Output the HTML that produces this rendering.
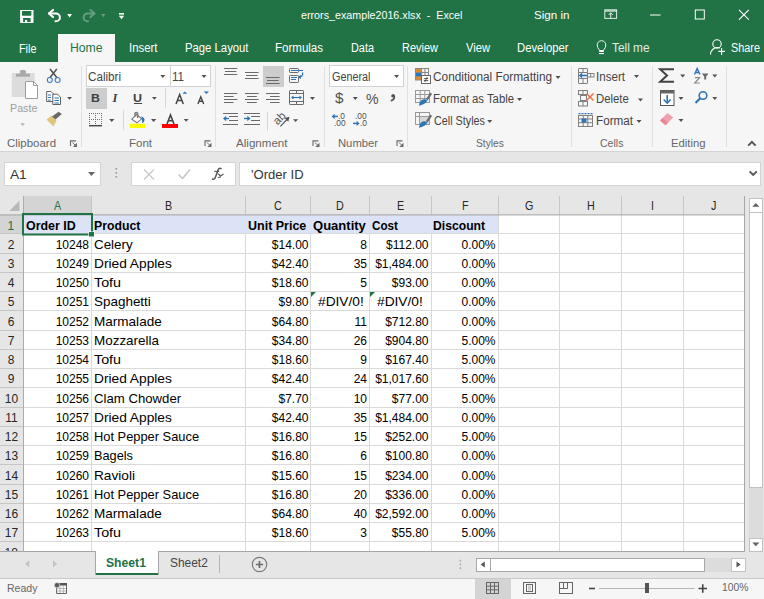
<!DOCTYPE html><html><head><meta charset="utf-8"><style>
html,body{margin:0;padding:0;width:764px;height:599px;overflow:hidden;background:#fff}
body{position:relative;font-family:"Liberation Sans",sans-serif}
.t{position:absolute;white-space:pre;line-height:1;transform-origin:0 0}
.r{position:absolute}
.s{position:absolute;left:0;top:0;overflow:visible}
</style></head><body>
<div class="r" style="left:0px;top:0px;width:764px;height:62px;background:#217346;"></div>
<div class="r" style="left:58px;top:34px;width:57px;height:28px;background:#f6f6f6;"></div>
<svg class="s" width="764" height="599" viewBox="0 0 764 599" style=""><rect x="20.1" y="10" width="13.4" height="12.9" fill="#fff"/><rect x="22" y="11" width="9.4" height="4.7" rx="0.6" fill="#217346"/><path d="M23.1 18 H30.6 V21.9 H27.1 V19.9 H25 V21.9 H23.1 Z" fill="#217346"/></svg>
<svg class="s" width="764" height="599" viewBox="0 0 764 599" style=""><path d="M49 13.5 H56 A3.9 3.9 0 0 1 56 21.3 H55.5" fill="none" stroke="#fff" stroke-width="2" stroke-linecap="round"/><path d="M53 10 L49 13.5 L53 17" fill="none" stroke="#fff" stroke-width="2.2" stroke-linecap="round" stroke-linejoin="round"/><path d="M67.2 14 H72 L69.6 17.4 Z" fill="#fff"/></svg>
<svg class="s" width="764" height="599" viewBox="0 0 764 599" style=""><g opacity="0.3"><path d="M94 13.5 H87.5 A3.9 3.9 0 0 0 87.5 21.3 H88" fill="none" stroke="#fff" stroke-width="2" stroke-linecap="round"/><path d="M90.5 10 L94.5 13.5 L90.5 17" fill="none" stroke="#fff" stroke-width="2.2" stroke-linecap="round" stroke-linejoin="round"/><path d="M101 14 H105.5 L103.25 17.2 Z" fill="#fff"/></g></svg>
<svg class="s" width="764" height="599" viewBox="0 0 764 599" style=""><rect x="119" y="13" width="5" height="1.6" fill="#fff"/><path d="M118.8 15.8 H124.2 L121.5 19.3 Z" fill="#fff"/></svg>
<div class="t" style="left:300.52px;top:10.25px;font-size:11.5px;color:#ffffff;font-weight:400;transform:scaleX(0.9322);">errors_example2016.xlsx  -  Excel</div>
<div class="t" style="left:534.48px;top:10.25px;font-size:11.5px;color:#ffffff;font-weight:400;transform:scaleX(1.0109);">Sign in</div>
<svg class="s" width="764" height="599" viewBox="0 0 764 599" style=""><rect x="604.8" y="9.8" width="11.8" height="8.6" fill="none" stroke="#fff" stroke-width="1" opacity="0.85"/><rect x="605" y="10" width="11.5" height="2" fill="#fff" opacity="0.55"/><path d="M610.7 18 V12.8 M608.6 15 L610.7 12.8 L612.8 15" fill="none" stroke="#fff" stroke-width="1" opacity="0.85"/></svg>
<svg class="s" width="764" height="599" viewBox="0 0 764 599" style=""><rect x="650" y="14.5" width="10.5" height="1" fill="#fff"/></svg>
<svg class="s" width="764" height="599" viewBox="0 0 764 599" style=""><rect x="695.3" y="10" width="9" height="9" fill="none" stroke="#fff" stroke-width="1"/></svg>
<svg class="s" width="764" height="599" viewBox="0 0 764 599" style=""><path d="M739 9.8 L748.8 19.6 M748.8 9.8 L739 19.6" stroke="#fff" stroke-width="1.1"/></svg>
<div class="t" style="left:18.51px;top:43.00px;font-size:12px;color:#ffffff;font-weight:400;transform:scaleX(0.9037);">File</div>
<div class="t" style="left:69.95px;top:42.00px;font-size:12px;color:#217346;font-weight:400;transform:scaleX(1.0184);">Home</div>
<div class="t" style="left:128.99px;top:42.00px;font-size:12px;color:#ffffff;font-weight:400;transform:scaleX(0.9505);">Insert</div>
<div class="t" style="left:184.99px;top:42.00px;font-size:12px;color:#ffffff;font-weight:400;transform:scaleX(0.9425);">Page Layout</div>
<div class="t" style="left:275.48px;top:42.00px;font-size:12px;color:#ffffff;font-weight:400;transform:scaleX(0.9605);">Formulas</div>
<div class="t" style="left:350.51px;top:42.00px;font-size:12px;color:#ffffff;font-weight:400;transform:scaleX(0.9065);">Data</div>
<div class="t" style="left:401.51px;top:42.00px;font-size:12px;color:#ffffff;font-weight:400;transform:scaleX(0.9146);">Review</div>
<div class="t" style="left:465.50px;top:42.00px;font-size:12px;color:#ffffff;font-weight:400;transform:scaleX(0.9306);">View</div>
<div class="t" style="left:516.99px;top:42.00px;font-size:12px;color:#ffffff;font-weight:400;transform:scaleX(0.9418);">Developer</div>
<svg class="s" width="764" height="599" viewBox="0 0 764 599" style=""><path d="M599.3 50 Q597.2 47.6 597.2 45 A4.3 4.3 0 0 1 605.8 45 Q605.8 47.6 603.7 50" fill="none" stroke="#fff" stroke-width="1" opacity="0.9"/><rect x="599.2" y="50" width="4.6" height="2" fill="#fff"/><rect x="599" y="53" width="5" height="1.1" fill="#fff"/></svg>
<div class="t" style="left:612.47px;top:42.00px;font-size:12px;color:#e0ece4;font-weight:400;transform:scaleX(0.9883);">Tell me</div>
<svg class="s" width="764" height="599" viewBox="0 0 764 599" style=""><g fill="none" stroke="#fff" stroke-width="1.1"><circle cx="717" cy="44" r="4.2"/><path d="M710.5 54.5 A7 7 0 0 1 720 48"/><path d="M718.3 51.4 H725 M721.6 48 V55"/></g></svg>
<div class="t" style="left:731.01px;top:42.00px;font-size:12px;color:#ffffff;font-weight:400;transform:scaleX(0.9049);">Share</div>
<div class="r" style="left:0px;top:62px;width:764px;height:89px;background:#f6f6f6;"></div>
<div class="r" style="left:0px;top:151px;width:764px;height:1px;background:#d4d4d4;"></div>
<div class="r" style="left:0px;top:152px;width:764px;height:44px;background:#e6e6e6;"></div>
<div class="r" style="left:81px;top:66px;width:1px;height:81px;background:#e0e0e0;"></div>
<div class="r" style="left:215px;top:66px;width:1px;height:81px;background:#e0e0e0;"></div>
<div class="r" style="left:324px;top:66px;width:1px;height:81px;background:#e0e0e0;"></div>
<div class="r" style="left:407px;top:66px;width:1px;height:81px;background:#e0e0e0;"></div>
<div class="r" style="left:571px;top:66px;width:1px;height:81px;background:#e0e0e0;"></div>
<div class="r" style="left:652px;top:66px;width:1px;height:81px;background:#e0e0e0;"></div>
<div class="r" style="left:726px;top:66px;width:1px;height:81px;background:#e0e0e0;"></div>
<div class="t" style="left:7.48px;top:137.50px;font-size:11px;color:#666666;font-weight:400;transform:scaleX(1.0413);">Clipboard</div>
<div class="t" style="left:128.98px;top:137.50px;font-size:11px;color:#666666;font-weight:400;transform:scaleX(1.0465);">Font</div>
<div class="t" style="left:235.98px;top:137.50px;font-size:11px;color:#666666;font-weight:400;transform:scaleX(1.0537);">Alignment</div>
<div class="t" style="left:338.49px;top:137.50px;font-size:11px;color:#666666;font-weight:400;transform:scaleX(1.0227);">Number</div>
<div class="t" style="left:476.04px;top:137.50px;font-size:11px;color:#666666;font-weight:400;transform:scaleX(0.9322);">Styles</div>
<div class="t" style="left:599.53px;top:137.50px;font-size:11px;color:#666666;font-weight:400;transform:scaleX(0.9591);">Cells</div>
<div class="t" style="left:671.49px;top:137.50px;font-size:11px;color:#666666;font-weight:400;transform:scaleX(1.0262);">Editing</div>
<svg class="s" width="764" height="599" viewBox="0 0 764 599" style=""><path d="M70.5 146 V140.9 H76" fill="none" stroke="#6a6a6a" stroke-width="1.1"/><path d="M77 142.8 V147 H72.8 Z" fill="#6a6a6a"/><path d="M72.5 142.5 L75 145" stroke="#6a6a6a" stroke-width="1"/></svg>
<svg class="s" width="764" height="599" viewBox="0 0 764 599" style=""><path d="M205.0 146 V140.9 H210.5" fill="none" stroke="#6a6a6a" stroke-width="1.1"/><path d="M211.5 142.8 V147 H207.3 Z" fill="#6a6a6a"/><path d="M207.0 142.5 L209.5 145" stroke="#6a6a6a" stroke-width="1"/></svg>
<svg class="s" width="764" height="599" viewBox="0 0 764 599" style=""><path d="M313.0 146 V140.9 H318.5" fill="none" stroke="#6a6a6a" stroke-width="1.1"/><path d="M319.5 142.8 V147 H315.3 Z" fill="#6a6a6a"/><path d="M315.0 142.5 L317.5 145" stroke="#6a6a6a" stroke-width="1"/></svg>
<svg class="s" width="764" height="599" viewBox="0 0 764 599" style=""><path d="M397.0 146 V140.9 H402.5" fill="none" stroke="#6a6a6a" stroke-width="1.1"/><path d="M403.5 142.8 V147 H399.3 Z" fill="#6a6a6a"/><path d="M399.0 142.5 L401.5 145" stroke="#6a6a6a" stroke-width="1"/></svg>
<svg class="s" width="764" height="599" viewBox="0 0 764 599" style=""><path d="M748.2 145.6 L751.9 141.9 L755.6 145.6" fill="none" stroke="#555" stroke-width="1.9"/></svg>
<div class="r" style="left:4px;top:162px;width:97px;height:24px;background:#fff;box-sizing:border-box;border:1px solid #d4d4d4"></div>
<div class="t" style="left:9.68px;top:168.50px;font-size:12px;color:#333;font-weight:400;transform:scaleX(1.1399);">A1</div>
<svg class="s" width="764" height="599" viewBox="0 0 764 599" style=""><path d="M88 172 H95 L91.5 176 Z" fill="#666"/></svg>
<svg class="s" width="764" height="599" viewBox="0 0 764 599" style=""><g fill="#999"><rect x="115.5" y="168" width="1.6" height="1.6"/><rect x="115.5" y="172" width="1.6" height="1.6"/><rect x="115.5" y="176" width="1.6" height="1.6"/></g></svg>
<div class="r" style="left:131px;top:162px;width:105px;height:24px;background:#fff;box-sizing:border-box;border:1px solid #d4d4d4"></div>
<svg class="s" width="764" height="599" viewBox="0 0 764 599" style=""><path d="M144 169.5 L154 179.5 M154 169.5 L144 179.5" stroke="#c6c6c6" stroke-width="1.1"/><path d="M178.5 174.5 L182.5 178.5 L190 169.5" fill="none" stroke="#c6c6c6" stroke-width="1.6"/></svg>
<svg class="s" width="764" height="599" viewBox="0 0 764 599" style=""><path d="M212.5 179 Q214.5 180 215.5 177 L218 170 Q219 167.6 221 168.6" fill="none" stroke="#555" stroke-width="1.5" stroke-linecap="round"/><path d="M214.3 171.4 H219.3" stroke="#555" stroke-width="1.1"/><path d="M217.8 174.2 Q219.5 173.6 220.5 177.5 M223.5 174 L218 177.8" fill="none" stroke="#555" stroke-width="1.2"/></svg>
<div class="r" style="left:239px;top:162px;width:522px;height:24px;background:#fff;box-sizing:border-box;border:1px solid #d4d4d4"></div>
<div class="t" style="left:250.71px;top:168.50px;font-size:12px;color:#333;font-weight:400;transform:scaleX(1.0885);">'Order ID</div>
<svg class="s" width="764" height="599" viewBox="0 0 764 599" style=""><path d="M749.6 171.4 L753.2 175 L756.8 171.4" fill="none" stroke="#555" stroke-width="1.9"/></svg>
<div class="r" style="left:0px;top:196px;width:745px;height:19px;background:#e6e6e6;"></div>
<div class="r" style="left:24px;top:196px;width:67px;height:18px;background:#d4d4d4;"></div>
<svg class="s" width="764" height="599" viewBox="0 0 764 599" style=""><path d="M9.5 211 L19.5 211 L19.5 200.5 Z" fill="#b9b9b9"/></svg>
<div class="r" style="left:91px;top:196px;width:1px;height:18px;background:#c6c6c6;"></div>
<div class="r" style="left:245px;top:196px;width:1px;height:18px;background:#c6c6c6;"></div>
<div class="r" style="left:310px;top:196px;width:1px;height:18px;background:#c6c6c6;"></div>
<div class="r" style="left:369px;top:196px;width:1px;height:18px;background:#c6c6c6;"></div>
<div class="r" style="left:431px;top:196px;width:1px;height:18px;background:#c6c6c6;"></div>
<div class="r" style="left:498px;top:196px;width:1px;height:18px;background:#c6c6c6;"></div>
<div class="r" style="left:559px;top:196px;width:1px;height:18px;background:#c6c6c6;"></div>
<div class="r" style="left:621px;top:196px;width:1px;height:18px;background:#c6c6c6;"></div>
<div class="r" style="left:683px;top:196px;width:1px;height:18px;background:#c6c6c6;"></div>
<div class="r" style="left:23px;top:196px;width:1px;height:355px;background:#ababab;"></div>
<div class="r" style="left:0px;top:214px;width:744px;height:1px;background:#bdbdbd;"></div>
<div class="r" style="left:0px;top:215px;width:23px;height:336px;background:#e6e6e6;"></div>
<div class="r" style="left:0px;top:215px;width:22px;height:19px;background:#d4d4d4;"></div>
<div class="t" style="left:53.91px;top:199.75px;font-size:12.5px;color:#217346;font-weight:400;transform:scaleX(0.8600);">A</div>
<div class="t" style="left:164.91px;top:199.75px;font-size:12.5px;color:#262626;font-weight:400;transform:scaleX(0.8600);">B</div>
<div class="t" style="left:274.12px;top:199.75px;font-size:12.5px;color:#262626;font-weight:400;transform:scaleX(0.8600);">C</div>
<div class="t" style="left:336.12px;top:199.75px;font-size:12.5px;color:#262626;font-weight:400;transform:scaleX(0.8600);">D</div>
<div class="t" style="left:396.91px;top:199.75px;font-size:12.5px;color:#262626;font-weight:400;transform:scaleX(0.8600);">E</div>
<div class="t" style="left:461.72px;top:199.75px;font-size:12.5px;color:#262626;font-weight:400;transform:scaleX(0.8600);">F</div>
<div class="t" style="left:524.82px;top:199.75px;font-size:12.5px;color:#262626;font-weight:400;transform:scaleX(0.8600);">G</div>
<div class="t" style="left:586.62px;top:199.75px;font-size:12.5px;color:#262626;font-weight:400;transform:scaleX(0.8600);">H</div>
<div class="t" style="left:651.01px;top:199.75px;font-size:12.5px;color:#262626;font-weight:400;transform:scaleX(0.8600);">I</div>
<div class="t" style="left:711.31px;top:199.75px;font-size:12.5px;color:#262626;font-weight:400;transform:scaleX(0.8600);">J</div>
<div class="r" style="left:24px;top:215px;width:720px;height:336px;background:#fff;"></div>
<div class="r" style="left:24px;top:215px;width:474px;height:19px;background:#dde3f6;"></div>
<div class="r" style="left:0px;top:233px;width:23px;height:1px;background:#c6c6c6;"></div>
<div class="r" style="left:24px;top:233px;width:720px;height:1px;background:#dadada;"></div>
<div class="r" style="left:0px;top:253px;width:23px;height:1px;background:#c6c6c6;"></div>
<div class="r" style="left:24px;top:253px;width:720px;height:1px;background:#dadada;"></div>
<div class="r" style="left:0px;top:272px;width:23px;height:1px;background:#c6c6c6;"></div>
<div class="r" style="left:24px;top:272px;width:720px;height:1px;background:#dadada;"></div>
<div class="r" style="left:0px;top:291px;width:23px;height:1px;background:#c6c6c6;"></div>
<div class="r" style="left:24px;top:291px;width:720px;height:1px;background:#dadada;"></div>
<div class="r" style="left:0px;top:310px;width:23px;height:1px;background:#c6c6c6;"></div>
<div class="r" style="left:24px;top:310px;width:720px;height:1px;background:#dadada;"></div>
<div class="r" style="left:0px;top:330px;width:23px;height:1px;background:#c6c6c6;"></div>
<div class="r" style="left:24px;top:330px;width:720px;height:1px;background:#dadada;"></div>
<div class="r" style="left:0px;top:349px;width:23px;height:1px;background:#c6c6c6;"></div>
<div class="r" style="left:24px;top:349px;width:720px;height:1px;background:#dadada;"></div>
<div class="r" style="left:0px;top:368px;width:23px;height:1px;background:#c6c6c6;"></div>
<div class="r" style="left:24px;top:368px;width:720px;height:1px;background:#dadada;"></div>
<div class="r" style="left:0px;top:387px;width:23px;height:1px;background:#c6c6c6;"></div>
<div class="r" style="left:24px;top:387px;width:720px;height:1px;background:#dadada;"></div>
<div class="r" style="left:0px;top:407px;width:23px;height:1px;background:#c6c6c6;"></div>
<div class="r" style="left:24px;top:407px;width:720px;height:1px;background:#dadada;"></div>
<div class="r" style="left:0px;top:426px;width:23px;height:1px;background:#c6c6c6;"></div>
<div class="r" style="left:24px;top:426px;width:720px;height:1px;background:#dadada;"></div>
<div class="r" style="left:0px;top:445px;width:23px;height:1px;background:#c6c6c6;"></div>
<div class="r" style="left:24px;top:445px;width:720px;height:1px;background:#dadada;"></div>
<div class="r" style="left:0px;top:464px;width:23px;height:1px;background:#c6c6c6;"></div>
<div class="r" style="left:24px;top:464px;width:720px;height:1px;background:#dadada;"></div>
<div class="r" style="left:0px;top:484px;width:23px;height:1px;background:#c6c6c6;"></div>
<div class="r" style="left:24px;top:484px;width:720px;height:1px;background:#dadada;"></div>
<div class="r" style="left:0px;top:503px;width:23px;height:1px;background:#c6c6c6;"></div>
<div class="r" style="left:24px;top:503px;width:720px;height:1px;background:#dadada;"></div>
<div class="r" style="left:0px;top:522px;width:23px;height:1px;background:#c6c6c6;"></div>
<div class="r" style="left:24px;top:522px;width:720px;height:1px;background:#dadada;"></div>
<div class="r" style="left:0px;top:541px;width:23px;height:1px;background:#c6c6c6;"></div>
<div class="r" style="left:24px;top:541px;width:720px;height:1px;background:#dadada;"></div>
<div class="r" style="left:91px;top:234px;width:1px;height:317px;background:#dadada;"></div>
<div class="r" style="left:245px;top:234px;width:1px;height:317px;background:#dadada;"></div>
<div class="r" style="left:310px;top:234px;width:1px;height:317px;background:#dadada;"></div>
<div class="r" style="left:369px;top:234px;width:1px;height:317px;background:#dadada;"></div>
<div class="r" style="left:431px;top:234px;width:1px;height:317px;background:#dadada;"></div>
<div class="r" style="left:498px;top:215px;width:1px;height:336px;background:#dadada;"></div>
<div class="r" style="left:559px;top:215px;width:1px;height:336px;background:#dadada;"></div>
<div class="r" style="left:621px;top:215px;width:1px;height:336px;background:#dadada;"></div>
<div class="r" style="left:683px;top:215px;width:1px;height:336px;background:#dadada;"></div>
<div class="r" style="left:744px;top:196px;width:1px;height:356px;background:#a6a6a6;"></div>
<div class="r" style="left:0px;top:551px;width:745px;height:1px;background:#a6a6a6;"></div>
<div class="t" style="left:25.84px;top:219.70px;font-size:12px;color:#000;font-weight:700;transform:scaleX(1.0355);">Order ID</div>
<div class="t" style="left:94.25px;top:219.70px;font-size:12px;color:#000;font-weight:700;transform:scaleX(1.0213);">Product</div>
<div class="t" style="left:247.94px;top:219.70px;font-size:12px;color:#000;font-weight:700;transform:scaleX(1.0412);">Unit Price</div>
<div class="t" style="left:312.61px;top:219.70px;font-size:12px;color:#000;font-weight:700;transform:scaleX(1.0864);">Quantity</div>
<div class="t" style="left:372.17px;top:219.70px;font-size:12px;color:#000;font-weight:700;transform:scaleX(0.9731);">Cost</div>
<div class="t" style="left:433.45px;top:219.70px;font-size:12px;color:#000;font-weight:700;transform:scaleX(1.0148);">Discount</div>
<div class="t" style="left:7.46px;top:220.00px;font-size:12px;color:#217346;font-weight:400">1</div>
<div class="t" style="left:7.66px;top:239.00px;font-size:12px;color:#262626;font-weight:400">2</div>
<div class="t" style="left:55.67px;top:239.00px;font-size:12px;color:#000;font-weight:400">10248</div>
<div class="t" style="left:93.80px;top:238.00px;font-size:13px;color:#000;font-weight:400;transform:scaleX(1.0304);">Celery</div>
<div class="t" style="left:271.83px;top:239.00px;font-size:12px;color:#000;font-weight:400">$14.00</div>
<div class="t" style="left:360.37px;top:239.00px;font-size:12px;color:#000;font-weight:400">8</div>
<div class="t" style="left:386.05px;top:239.00px;font-size:12px;color:#000;font-weight:400">$112.00</div>
<div class="t" style="left:461.51px;top:239.00px;font-size:12px;color:#000;font-weight:400">0.00%</div>
<div class="t" style="left:7.66px;top:258.00px;font-size:12px;color:#262626;font-weight:400">3</div>
<div class="t" style="left:55.67px;top:258.00px;font-size:12px;color:#000;font-weight:400">10249</div>
<div class="t" style="left:93.78px;top:257.00px;font-size:13px;color:#000;font-weight:400;transform:scaleX(1.0560);">Dried Apples</div>
<div class="t" style="left:271.83px;top:258.00px;font-size:12px;color:#000;font-weight:400">$42.40</div>
<div class="t" style="left:353.69px;top:258.00px;font-size:12px;color:#000;font-weight:400">35</div>
<div class="t" style="left:375.15px;top:258.00px;font-size:12px;color:#000;font-weight:400">$1,484.00</div>
<div class="t" style="left:461.51px;top:258.00px;font-size:12px;color:#000;font-weight:400">0.00%</div>
<div class="t" style="left:7.66px;top:277.00px;font-size:12px;color:#262626;font-weight:400">4</div>
<div class="t" style="left:55.67px;top:277.00px;font-size:12px;color:#000;font-weight:400">10250</div>
<div class="t" style="left:93.76px;top:276.00px;font-size:13px;color:#000;font-weight:400;transform:scaleX(1.0982);">Tofu</div>
<div class="t" style="left:271.83px;top:277.00px;font-size:12px;color:#000;font-weight:400">$18.60</div>
<div class="t" style="left:360.37px;top:277.00px;font-size:12px;color:#000;font-weight:400">5</div>
<div class="t" style="left:391.83px;top:277.00px;font-size:12px;color:#000;font-weight:400">$93.00</div>
<div class="t" style="left:461.51px;top:277.00px;font-size:12px;color:#000;font-weight:400">0.00%</div>
<div class="t" style="left:7.66px;top:296.00px;font-size:12px;color:#262626;font-weight:400">5</div>
<div class="t" style="left:55.67px;top:296.00px;font-size:12px;color:#000;font-weight:400">10251</div>
<div class="t" style="left:93.79px;top:295.00px;font-size:13px;color:#000;font-weight:400;transform:scaleX(1.0342);">Spaghetti</div>
<div class="t" style="left:278.51px;top:296.00px;font-size:12px;color:#000;font-weight:400">$9.80</div>
<div class="t" style="left:317.68px;top:296.00px;font-size:12px;color:#000;font-weight:400;transform:scaleX(1.1427);">#DIV/0!</div>
<div class="t" style="left:377.18px;top:296.00px;font-size:12px;color:#000;font-weight:400;transform:scaleX(1.1427);">#DIV/0!</div>
<div class="t" style="left:461.51px;top:296.00px;font-size:12px;color:#000;font-weight:400">0.00%</div>
<div class="t" style="left:7.66px;top:316.00px;font-size:12px;color:#262626;font-weight:400">6</div>
<div class="t" style="left:55.67px;top:316.00px;font-size:12px;color:#000;font-weight:400">10252</div>
<div class="t" style="left:93.79px;top:315.00px;font-size:13px;color:#000;font-weight:400;transform:scaleX(1.0414);">Marmalade</div>
<div class="t" style="left:271.83px;top:316.00px;font-size:12px;color:#000;font-weight:400">$64.80</div>
<div class="t" style="left:354.58px;top:316.00px;font-size:12px;color:#000;font-weight:400">11</div>
<div class="t" style="left:385.16px;top:316.00px;font-size:12px;color:#000;font-weight:400">$712.80</div>
<div class="t" style="left:461.51px;top:316.00px;font-size:12px;color:#000;font-weight:400">0.00%</div>
<div class="t" style="left:7.66px;top:335.00px;font-size:12px;color:#262626;font-weight:400">7</div>
<div class="t" style="left:55.67px;top:335.00px;font-size:12px;color:#000;font-weight:400">10253</div>
<div class="t" style="left:93.79px;top:334.00px;font-size:13px;color:#000;font-weight:400;transform:scaleX(1.0343);">Mozzarella</div>
<div class="t" style="left:271.83px;top:335.00px;font-size:12px;color:#000;font-weight:400">$34.80</div>
<div class="t" style="left:353.69px;top:335.00px;font-size:12px;color:#000;font-weight:400">26</div>
<div class="t" style="left:385.16px;top:335.00px;font-size:12px;color:#000;font-weight:400">$904.80</div>
<div class="t" style="left:461.51px;top:335.00px;font-size:12px;color:#000;font-weight:400">5.00%</div>
<div class="t" style="left:7.66px;top:354.00px;font-size:12px;color:#262626;font-weight:400">8</div>
<div class="t" style="left:55.67px;top:354.00px;font-size:12px;color:#000;font-weight:400">10254</div>
<div class="t" style="left:93.76px;top:353.00px;font-size:13px;color:#000;font-weight:400;transform:scaleX(1.0982);">Tofu</div>
<div class="t" style="left:271.83px;top:354.00px;font-size:12px;color:#000;font-weight:400">$18.60</div>
<div class="t" style="left:360.37px;top:354.00px;font-size:12px;color:#000;font-weight:400">9</div>
<div class="t" style="left:385.16px;top:354.00px;font-size:12px;color:#000;font-weight:400">$167.40</div>
<div class="t" style="left:461.51px;top:354.00px;font-size:12px;color:#000;font-weight:400">5.00%</div>
<div class="t" style="left:7.66px;top:373.00px;font-size:12px;color:#262626;font-weight:400">9</div>
<div class="t" style="left:55.67px;top:373.00px;font-size:12px;color:#000;font-weight:400">10255</div>
<div class="t" style="left:93.78px;top:372.00px;font-size:13px;color:#000;font-weight:400;transform:scaleX(1.0560);">Dried Apples</div>
<div class="t" style="left:271.83px;top:373.00px;font-size:12px;color:#000;font-weight:400">$42.40</div>
<div class="t" style="left:353.69px;top:373.00px;font-size:12px;color:#000;font-weight:400">24</div>
<div class="t" style="left:375.15px;top:373.00px;font-size:12px;color:#000;font-weight:400">$1,017.60</div>
<div class="t" style="left:461.51px;top:373.00px;font-size:12px;color:#000;font-weight:400">5.00%</div>
<div class="t" style="left:4.73px;top:393.00px;font-size:12px;color:#262626;font-weight:400">10</div>
<div class="t" style="left:55.67px;top:393.00px;font-size:12px;color:#000;font-weight:400">10256</div>
<div class="t" style="left:93.81px;top:392.00px;font-size:13px;color:#000;font-weight:400;transform:scaleX(1.0130);">Clam Chowder</div>
<div class="t" style="left:278.51px;top:393.00px;font-size:12px;color:#000;font-weight:400">$7.70</div>
<div class="t" style="left:353.69px;top:393.00px;font-size:12px;color:#000;font-weight:400">10</div>
<div class="t" style="left:391.83px;top:393.00px;font-size:12px;color:#000;font-weight:400">$77.00</div>
<div class="t" style="left:461.51px;top:393.00px;font-size:12px;color:#000;font-weight:400">5.00%</div>
<div class="t" style="left:5.17px;top:412.00px;font-size:12px;color:#262626;font-weight:400">11</div>
<div class="t" style="left:55.67px;top:412.00px;font-size:12px;color:#000;font-weight:400">10257</div>
<div class="t" style="left:93.78px;top:411.00px;font-size:13px;color:#000;font-weight:400;transform:scaleX(1.0560);">Dried Apples</div>
<div class="t" style="left:271.83px;top:412.00px;font-size:12px;color:#000;font-weight:400">$42.40</div>
<div class="t" style="left:353.69px;top:412.00px;font-size:12px;color:#000;font-weight:400">35</div>
<div class="t" style="left:375.15px;top:412.00px;font-size:12px;color:#000;font-weight:400">$1,484.00</div>
<div class="t" style="left:461.51px;top:412.00px;font-size:12px;color:#000;font-weight:400">0.00%</div>
<div class="t" style="left:4.73px;top:431.00px;font-size:12px;color:#262626;font-weight:400">12</div>
<div class="t" style="left:55.67px;top:431.00px;font-size:12px;color:#000;font-weight:400">10258</div>
<div class="t" style="left:93.82px;top:430.00px;font-size:13px;color:#000;font-weight:400;transform:scaleX(0.9889);">Hot Pepper Sauce</div>
<div class="t" style="left:271.83px;top:431.00px;font-size:12px;color:#000;font-weight:400">$16.80</div>
<div class="t" style="left:353.69px;top:431.00px;font-size:12px;color:#000;font-weight:400">15</div>
<div class="t" style="left:385.16px;top:431.00px;font-size:12px;color:#000;font-weight:400">$252.00</div>
<div class="t" style="left:461.51px;top:431.00px;font-size:12px;color:#000;font-weight:400">5.00%</div>
<div class="t" style="left:4.73px;top:450.00px;font-size:12px;color:#262626;font-weight:400">13</div>
<div class="t" style="left:55.67px;top:450.00px;font-size:12px;color:#000;font-weight:400">10259</div>
<div class="t" style="left:93.83px;top:449.00px;font-size:13px;color:#000;font-weight:400;transform:scaleX(0.9798);">Bagels</div>
<div class="t" style="left:271.83px;top:450.00px;font-size:12px;color:#000;font-weight:400">$16.80</div>
<div class="t" style="left:360.37px;top:450.00px;font-size:12px;color:#000;font-weight:400">6</div>
<div class="t" style="left:385.16px;top:450.00px;font-size:12px;color:#000;font-weight:400">$100.80</div>
<div class="t" style="left:461.51px;top:450.00px;font-size:12px;color:#000;font-weight:400">0.00%</div>
<div class="t" style="left:4.73px;top:470.00px;font-size:12px;color:#262626;font-weight:400">14</div>
<div class="t" style="left:55.67px;top:470.00px;font-size:12px;color:#000;font-weight:400">10260</div>
<div class="t" style="left:93.78px;top:469.00px;font-size:13px;color:#000;font-weight:400;transform:scaleX(1.0517);">Ravioli</div>
<div class="t" style="left:271.83px;top:470.00px;font-size:12px;color:#000;font-weight:400">$15.60</div>
<div class="t" style="left:353.69px;top:470.00px;font-size:12px;color:#000;font-weight:400">15</div>
<div class="t" style="left:385.16px;top:470.00px;font-size:12px;color:#000;font-weight:400">$234.00</div>
<div class="t" style="left:461.51px;top:470.00px;font-size:12px;color:#000;font-weight:400">0.00%</div>
<div class="t" style="left:4.73px;top:489.00px;font-size:12px;color:#262626;font-weight:400">15</div>
<div class="t" style="left:55.67px;top:489.00px;font-size:12px;color:#000;font-weight:400">10261</div>
<div class="t" style="left:93.82px;top:488.00px;font-size:13px;color:#000;font-weight:400;transform:scaleX(0.9889);">Hot Pepper Sauce</div>
<div class="t" style="left:271.83px;top:489.00px;font-size:12px;color:#000;font-weight:400">$16.80</div>
<div class="t" style="left:353.69px;top:489.00px;font-size:12px;color:#000;font-weight:400">20</div>
<div class="t" style="left:385.16px;top:489.00px;font-size:12px;color:#000;font-weight:400">$336.00</div>
<div class="t" style="left:461.51px;top:489.00px;font-size:12px;color:#000;font-weight:400">0.00%</div>
<div class="t" style="left:4.73px;top:508.00px;font-size:12px;color:#262626;font-weight:400">16</div>
<div class="t" style="left:55.67px;top:508.00px;font-size:12px;color:#000;font-weight:400">10262</div>
<div class="t" style="left:93.79px;top:507.00px;font-size:13px;color:#000;font-weight:400;transform:scaleX(1.0414);">Marmalade</div>
<div class="t" style="left:271.83px;top:508.00px;font-size:12px;color:#000;font-weight:400">$64.80</div>
<div class="t" style="left:353.69px;top:508.00px;font-size:12px;color:#000;font-weight:400">40</div>
<div class="t" style="left:375.15px;top:508.00px;font-size:12px;color:#000;font-weight:400">$2,592.00</div>
<div class="t" style="left:461.51px;top:508.00px;font-size:12px;color:#000;font-weight:400">0.00%</div>
<div class="t" style="left:4.73px;top:527.00px;font-size:12px;color:#262626;font-weight:400">17</div>
<div class="t" style="left:55.67px;top:527.00px;font-size:12px;color:#000;font-weight:400">10263</div>
<div class="t" style="left:93.76px;top:526.00px;font-size:13px;color:#000;font-weight:400;transform:scaleX(1.0982);">Tofu</div>
<div class="t" style="left:271.83px;top:527.00px;font-size:12px;color:#000;font-weight:400">$18.60</div>
<div class="t" style="left:360.37px;top:527.00px;font-size:12px;color:#000;font-weight:400">3</div>
<div class="t" style="left:391.83px;top:527.00px;font-size:12px;color:#000;font-weight:400">$55.80</div>
<div class="t" style="left:461.51px;top:527.00px;font-size:12px;color:#000;font-weight:400">5.00%</div>
<div style="position:absolute;left:0;top:542px;width:23px;height:9px;overflow:hidden"><div class="t" style="left:4.5px;top:4.84px;font-size:12px;color:#262626">18</div></div>
<div class="r" style="left:0px;top:215px;width:744px;height:1px;background:rgba(150,150,150,0.35);"></div>
<svg class="s" width="764" height="599" viewBox="0 0 764 599" style=""><path d="M311 292 H316 L311 297 Z" fill="#217346"/><path d="M370 292 H375 L370 297 Z" fill="#217346"/></svg>
<svg class="s" width="764" height="599" viewBox="0 0 764 599" style=""><rect x="23" y="214" width="69" height="20.5" fill="none" stroke="#217346" stroke-width="2"/><rect x="88.5" y="231.5" width="6" height="5" fill="#fff"/><rect x="89" y="232" width="5" height="4.5" fill="#217346"/></svg>
<div class="r" style="left:745px;top:196px;width:19px;height:356px;background:#e6e6e6;"></div>
<div class="r" style="left:749px;top:198px;width:14px;height:15px;background:#fff;box-sizing:border-box;border:1px solid #c2c2c2"></div>
<svg class="s" width="764" height="599" viewBox="0 0 764 599" style=""><path d="M752.3 206.7 H759.3 L755.8 203 Z" fill="#606060"/></svg>
<div class="r" style="left:749px;top:212px;width:14px;height:326px;background:#dcdcdc;"></div>
<div class="r" style="left:749px;top:212px;width:14px;height:276px;background:#fff;box-sizing:border-box;border:1px solid #c2c2c2"></div>
<div class="r" style="left:749px;top:538px;width:14px;height:14px;background:#fff;box-sizing:border-box;border:1px solid #c2c2c2"></div>
<svg class="s" width="764" height="599" viewBox="0 0 764 599" style=""><path d="M752.3 542.5 H759.3 L755.8 546.2 Z" fill="#606060"/></svg>
<div class="r" style="left:0px;top:552px;width:764px;height:26px;background:#e6e6e6;"></div>
<div class="r" style="left:0px;top:578px;width:764px;height:1px;background:#c8c8c8;"></div>
<svg class="s" width="764" height="599" viewBox="0 0 764 599" style=""><path d="M29.2 560.2 V567.4 L25 563.8 Z" fill="#c4c4c4"/><path d="M53 560.2 V567.4 L57.2 563.8 Z" fill="#c4c4c4"/></svg>
<div class="r" style="left:95px;top:551px;width:64px;height:24px;background:#fff;box-sizing:border-box;border-left:1px solid #a6a6a6;border-right:1px solid #a6a6a6"></div>
<div class="r" style="left:96px;top:573px;width:62px;height:2px;background:#217346;"></div>
<div class="t" style="left:106.45px;top:557.35px;font-size:12.5px;color:#217346;font-weight:700;transform:scaleX(0.9733);">Sheet1</div>
<div class="t" style="left:170.06px;top:557.35px;font-size:12.5px;color:#444;font-weight:400;transform:scaleX(0.9535);">Sheet2</div>
<div class="r" style="left:219px;top:555px;width:1px;height:18px;background:#b4b4b4;"></div>
<svg class="s" width="764" height="599" viewBox="0 0 764 599" style=""><circle cx="259.5" cy="564.5" r="7.2" fill="none" stroke="#7a7a7a" stroke-width="1.2"/><path d="M255.9 564.5 H263.1 M259.5 560.9 V568.1" stroke="#6a6a6a" stroke-width="1.7"/></svg>
<svg class="s" width="764" height="599" viewBox="0 0 764 599" style=""><g fill="#a8a8a8"><rect x="459.6" y="559.8" width="1.6" height="1.6"/><rect x="459.6" y="563.6" width="1.6" height="1.6"/><rect x="459.6" y="567.4" width="1.6" height="1.6"/></g></svg>
<div class="r" style="left:476px;top:558px;width:15px;height:14px;background:#fff;box-sizing:border-box;border:1px solid #a8a8a8"></div>
<svg class="s" width="764" height="599" viewBox="0 0 764 599" style=""><path d="M484.8 561.5 V567.5 L480.6 564.5 Z" fill="#555"/></svg>
<div class="r" style="left:490px;top:558px;width:241px;height:14px;background:#dcdcdc;"></div>
<div class="r" style="left:490px;top:558px;width:215px;height:14px;background:#fff;box-sizing:border-box;border:1px solid #a8a8a8"></div>
<div class="r" style="left:731px;top:558px;width:15px;height:14px;background:#fff;box-sizing:border-box;border:1px solid #c2c2c2"></div>
<svg class="s" width="764" height="599" viewBox="0 0 764 599" style=""><path d="M736.5 561.5 V567.5 L740.7 564.5 Z" fill="#555"/></svg>
<div class="r" style="left:0px;top:579px;width:764px;height:20px;background:#f6f6f6;"></div>
<div class="t" style="left:6.53px;top:582.55px;font-size:11.5px;color:#666;font-weight:400;transform:scaleX(0.9159);">Ready</div>
<svg class="s" width="764" height="599" viewBox="0 0 764 599" style=""><rect x="59" y="583" width="8" height="2.5" fill="#555"/><g fill="none" stroke="#666" stroke-width="1"><path d="M56.5 585 V593.5 H66.5 V585"/></g><g stroke="#888" stroke-width="1" stroke-dasharray="1 1"><path d="M56.5 588.5 H66.5 M56.5 591 H66.5 M60 585.5 V593 M63.3 585.5 V593"/></g><circle cx="57" cy="585.2" r="2.7" fill="#5a5a5a" stroke="#f6f6f6" stroke-width="0.6"/></svg>
<div class="r" style="left:475px;top:579px;width:36px;height:20px;background:#d4d4d4;"></div>
<svg class="s" width="764" height="599" viewBox="0 0 764 599" style=""><g fill="none" stroke="#666" stroke-width="1"><rect x="486.5" y="582.5" width="12" height="11"/><path d="M486.5 586.2 H498.5 M486.5 589.8 H498.5 M490.5 582.5 V593.5 M494.5 582.5 V593.5"/></g></svg>
<svg class="s" width="764" height="599" viewBox="0 0 764 599" style=""><g fill="none" stroke="#666" stroke-width="1"><rect x="523.5" y="582.5" width="12" height="11"/><rect x="526.5" y="584.5" width="6" height="7"/></g><rect x="528" y="585.5" width="3" height="5" fill="#ccc"/></svg>
<svg class="s" width="764" height="599" viewBox="0 0 764 599" style=""><g fill="none" stroke="#666" stroke-width="1"><rect x="559.5" y="582.5" width="13" height="11"/><path d="M559.5 588.5 H567.5 V582.5 M563.5 582.5 V588.5"/></g></svg>
<svg class="s" width="764" height="599" viewBox="0 0 764 599" style=""><path d="M589 588.5 H595" stroke="#444" stroke-width="1.6"/><path d="M599 588.5 H694.5" stroke="#b4b4b4" stroke-width="1"/><rect x="645" y="583" width="4" height="10" fill="#555"/><path d="M698.5 588.5 H707 M702.75 584.25 V592.75" stroke="#444" stroke-width="1.6"/></svg>
<div class="t" style="left:721.53px;top:581.75px;font-size:11.5px;color:#666;font-weight:400;transform:scaleX(0.8986);">100%</div>
<svg class="s" width="764" height="599" viewBox="0 0 764 599" style=""><rect x="11.8" y="73" width="23" height="24" fill="#dcdcdc"/><rect x="16" y="73.7" width="14" height="3" fill="#a9a9a9"/><rect x="19.9" y="70" width="6" height="4" rx="1.5" fill="#a9a9a9"/><path d="M25.5 81.5 H33.5 L37.5 85.5 V98.5 H25.5 Z" fill="#fff" stroke="#9c9c9c" stroke-width="1"/><path d="M33.5 81.5 V85.5 H37.5" fill="none" stroke="#9c9c9c" stroke-width="1"/></svg>
<div class="t" style="left:9.52px;top:103.35px;font-size:11.3px;color:#a0a0a0;font-weight:400;transform:scaleX(0.9470);">Paste</div>
<svg class="s" width="764" height="599" viewBox="0 0 764 599" style=""><path d="M20.4 123.3 H25 L22.7 125.968 Z" fill="#b0b0b0"/></svg>
<svg class="s" width="764" height="599" viewBox="0 0 764 599" style=""><path d="M50 69 L57.2 78 M56.8 69 L49.6 78" stroke="#505050" stroke-width="1.5" fill="none"/><circle cx="49.8" cy="80" r="2.5" fill="none" stroke="#3b7fc4" stroke-width="1.1"/><circle cx="57.6" cy="80" r="2.5" fill="none" stroke="#3b7fc4" stroke-width="1.1"/></svg>
<svg class="s" width="764" height="599" viewBox="0 0 764 599" style=""><path d="M46.7 91.5 H51 L53.5 94 V101.5 H46.7 Z" fill="#fff" stroke="#606060" stroke-width="1"/><path d="M52.8 94.2 H57.5 L60.5 97.2 V104.5 H52.8 Z" fill="#fff" stroke="#606060" stroke-width="1"/><path d="M48 95 H51 M48 97.5 H51 M48 100 H50.5" stroke="#2e75b6" stroke-width="1"/><path d="M54.5 98 H59 M54.5 100.5 H59 M54.5 103 H59" stroke="#2e75b6" stroke-width="1"/></svg>
<svg class="s" width="764" height="599" viewBox="0 0 764 599" style=""><path d="M67.1 97 H72 L69.55 99.842 Z" fill="#505050"/></svg>
<svg class="s" width="764" height="599" viewBox="0 0 764 599" style=""><path d="M46.5 119.5 L51.5 115.5 L56.5 120.5 L53.5 126.5 Z" fill="#e2c47c"/><path d="M52 116.5 L55.5 119.5 L61.8 114 L58.6 111.8 Z" fill="#6a6a6a"/></svg>
<div class="r" style="left:86px;top:65px;width:85px;height:22px;background:#fff;box-sizing:border-box;border:1px solid #d2d2d2"></div>
<div class="r" style="left:170px;top:65px;width:41px;height:22px;background:#fff;box-sizing:border-box;border:1px solid #d2d2d2"></div>
<div class="t" style="left:88.08px;top:71.00px;font-size:12px;color:#444;font-weight:400;transform:scaleX(0.9718);">Calibri</div>
<div class="t" style="left:171.98px;top:71.00px;font-size:12px;color:#444;font-weight:400;transform:scaleX(0.9668);">11</div>
<svg class="s" width="764" height="599" viewBox="0 0 764 599" style=""><path d="M160.3 75 H165.3 L162.8 77.9 Z" fill="#505050"/></svg>
<svg class="s" width="764" height="599" viewBox="0 0 764 599" style=""><path d="M201.5 75 H206.5 L204.0 77.9 Z" fill="#505050"/></svg>
<div class="r" style="left:85.6px;top:87.6px;width:21px;height:21.7px;background:#cdcdcd;"></div>
<div class="t" style="left:91.34px;top:93.05px;font-size:11.5px;color:#404040;font-weight:700;transform:scaleX(1.0729);">B</div>
<div class="t" style="left:112.5px;top:92px;font-family:'Liberation Serif';font-style:italic;font-weight:700;font-size:12.5px;color:#404040">I</div>
<div class="t" style="left:133.14px;top:92.65px;font-size:11.5px;color:#404040;font-weight:700;transform:scaleX(1.0867);">U</div>
<div class="r" style="left:133.5px;top:103px;width:8.5px;height:1px;background:#444;"></div>
<svg class="s" width="764" height="599" viewBox="0 0 764 599" style=""><path d="M151.9 97 H156.8 L154.35000000000002 99.842 Z" fill="#505050"/></svg>
<div class="r" style="left:164.5px;top:88px;width:1px;height:20px;background:#d8d8d8;"></div>
<svg class="s" width="764" height="599" viewBox="0 0 764 599" style=""><path d="M176 104 L179.65 94.5 L183.3 104 M177.4 100.6 H181.9" fill="none" stroke="#454545" stroke-width="1.5"/></svg>
<svg class="s" width="764" height="599" viewBox="0 0 764 599" style=""><path d="M182.5 93.8 H187.2 L184.85 91.4 Z" fill="#2e75b6"/></svg>
<svg class="s" width="764" height="599" viewBox="0 0 764 599" style=""><path d="M197.9 104 L200.8 96.8 L203.7 104 M199 101.3 H202.6" fill="none" stroke="#454545" stroke-width="1.4"/></svg>
<svg class="s" width="764" height="599" viewBox="0 0 764 599" style=""><path d="M203.7 91.4 H209 L206.35 93.9 Z" fill="#2e75b6"/></svg>
<svg class="s" width="764" height="599" viewBox="0 0 764 599" style=""><g fill="#707070"><rect x="89" y="113" width="1" height="1"/><rect x="89" y="119" width="1" height="1"/><rect x="91" y="113" width="1" height="1"/><rect x="91" y="119" width="1" height="1"/><rect x="93" y="113" width="1" height="1"/><rect x="93" y="119" width="1" height="1"/><rect x="95" y="113" width="1" height="1"/><rect x="95" y="119" width="1" height="1"/><rect x="97" y="113" width="1" height="1"/><rect x="97" y="119" width="1" height="1"/><rect x="99" y="113" width="1" height="1"/><rect x="99" y="119" width="1" height="1"/><rect x="101" y="113" width="1" height="1"/><rect x="101" y="119" width="1" height="1"/><rect x="89" y="115" width="1" height="1"/><rect x="89" y="117" width="1" height="1"/><rect x="89" y="121" width="1" height="1"/><rect x="89" y="123" width="1" height="1"/><rect x="95" y="115" width="1" height="1"/><rect x="95" y="117" width="1" height="1"/><rect x="95" y="121" width="1" height="1"/><rect x="95" y="123" width="1" height="1"/><rect x="101" y="115" width="1" height="1"/><rect x="101" y="117" width="1" height="1"/><rect x="101" y="121" width="1" height="1"/><rect x="101" y="123" width="1" height="1"/></g><rect x="89" y="125" width="13" height="1.4" fill="#444"/></svg>
<svg class="s" width="764" height="599" viewBox="0 0 764 599" style=""><path d="M109.1 119 H114.4 L111.75 122.07400000000001 Z" fill="#505050"/></svg>
<div class="r" style="left:122.5px;top:110px;width:1px;height:20px;background:#d8d8d8;"></div>
<svg class="s" width="764" height="599" viewBox="0 0 764 599" style=""><path d="M131.8 119.2 L136.7 114.6 L141.6 118.8 L137 122.8 Z" fill="#fff" stroke="#7a7a7a" stroke-width="1.1"/><path d="M135 116.5 V113.2 Q136.3 111.6 137.6 113.2 V118" fill="none" stroke="#7a7a7a" stroke-width="1.5"/><path d="M141.3 116.2 Q145.3 117.8 144.4 120.8 Q143.8 122.6 142.2 123.2 L142 119.2 Z" fill="#2e75b6"/><rect x="129.7" y="123.8" width="15.4" height="4.2" fill="#ffff00"/></svg>
<svg class="s" width="764" height="599" viewBox="0 0 764 599" style=""><path d="M151 119 H156.3 L153.65 122.07400000000001 Z" fill="#505050"/></svg>
<svg class="s" width="764" height="599" viewBox="0 0 764 599" style=""><path d="M167 124 L170.5 115 L174 124 M168.4 120.8 H172.6" fill="none" stroke="#454545" stroke-width="1.6"/></svg>
<div class="r" style="left:162px;top:124px;width:16px;height:4px;background:#ff0000;"></div>
<svg class="s" width="764" height="599" viewBox="0 0 764 599" style=""><path d="M183.7 119 H188.6 L186.14999999999998 121.842 Z" fill="#505050"/></svg>
<svg class="s" width="764" height="599" viewBox="0 0 764 599" style=""><rect x="224" y="68" width="13.3" height="1" fill="#6a6a6a"/><rect x="225" y="71" width="11.3" height="1" fill="#6a6a6a"/><rect x="224" y="74" width="13.3" height="1" fill="#6a6a6a"/></svg>
<svg class="s" width="764" height="599" viewBox="0 0 764 599" style=""><rect x="245" y="72" width="13.6" height="1" fill="#6a6a6a"/><rect x="246" y="75" width="11.6" height="1" fill="#6a6a6a"/><rect x="245" y="78" width="13.6" height="1" fill="#6a6a6a"/></svg>
<div class="r" style="left:262.5px;top:65.5px;width:21px;height:21.5px;background:#cdcdcd;"></div>
<svg class="s" width="764" height="599" viewBox="0 0 764 599" style=""><rect x="266" y="77" width="13.6" height="1" fill="#6a6a6a"/><rect x="267" y="80" width="11.6" height="1" fill="#6a6a6a"/><rect x="266" y="83" width="13.6" height="1" fill="#6a6a6a"/></svg>
<svg class="s" width="764" height="599" viewBox="0 0 764 599" style=""><g fill="none" stroke="#6a6a6a" stroke-width="1"><rect x="289.5" y="68.5" width="9" height="4" rx="0.8"/><rect x="289.5" y="75.5" width="9" height="7" rx="0.8"/></g><path d="M291 70.5 H303" stroke="#2e75b6" stroke-width="1"/><path d="M302.5 72.5 Q303.5 76.5 299.5 77" fill="none" stroke="#2e75b6" stroke-width="1.3"/><path d="M298 77 L300.8 74.8 V79.2 Z" fill="#2e75b6"/><path d="M291 77.5 H297 M291 79.5 H296" stroke="#2e75b6" stroke-width="1"/></svg>
<svg class="s" width="764" height="599" viewBox="0 0 764 599" style=""><rect x="224" y="93" width="13.3" height="1" fill="#6a6a6a"/><rect x="224" y="96" width="9.6" height="1" fill="#6a6a6a"/><rect x="224" y="99" width="13.3" height="1" fill="#6a6a6a"/><rect x="224" y="102" width="9.6" height="1" fill="#6a6a6a"/></svg>
<svg class="s" width="764" height="599" viewBox="0 0 764 599" style=""><rect x="245" y="93" width="13.6" height="1" fill="#6a6a6a"/><rect x="247" y="96" width="9.8" height="1" fill="#6a6a6a"/><rect x="245" y="99" width="13.6" height="1" fill="#6a6a6a"/><rect x="247" y="102" width="9.8" height="1" fill="#6a6a6a"/></svg>
<svg class="s" width="764" height="599" viewBox="0 0 764 599" style=""><rect x="266" y="93" width="13.6" height="1" fill="#6a6a6a"/><rect x="270" y="96" width="9.6" height="1" fill="#6a6a6a"/><rect x="266" y="99" width="13.6" height="1" fill="#6a6a6a"/><rect x="270" y="102" width="9.6" height="1" fill="#6a6a6a"/></svg>
<svg class="s" width="764" height="599" viewBox="0 0 764 599" style=""><g fill="none" stroke="#6a6a6a" stroke-width="1"><rect x="289.5" y="90.5" width="14" height="14" rx="0.6"/><path d="M289.5 93.5 H303.5 M289.5 101.5 H303.5 M296.5 90.5 V93.5 M296.5 101.5 V104.5"/></g><path d="M292 97.5 H301" stroke="#2e75b6" stroke-width="1.1"/><path d="M291 97.5 L293.5 95.5 V99.5 Z M302 97.5 L299.5 95.5 V99.5 Z" fill="#2e75b6"/></svg>
<svg class="s" width="764" height="599" viewBox="0 0 764 599" style=""><path d="M309.9 97 H314.9 L312.4 99.9 Z" fill="#505050"/></svg>
<svg class="s" width="764" height="599" viewBox="0 0 764 599" style=""><g fill="#6a6a6a"><rect x="223" y="113" width="15" height="1"/><rect x="229" y="116" width="9" height="1"/><rect x="229" y="120" width="9" height="1"/><rect x="223" y="124" width="15" height="1"/></g><path d="M224.5 118.5 H229" stroke="#2e75b6" stroke-width="1.4"/><path d="M223 118.5 L226.2 115.7 V121.3 Z" fill="#2e75b6"/></svg>
<svg class="s" width="764" height="599" viewBox="0 0 764 599" style=""><g fill="#6a6a6a"><rect x="244" y="113" width="16" height="1"/><rect x="251" y="116" width="9" height="1"/><rect x="251" y="120" width="9" height="1"/><rect x="244" y="124" width="16" height="1"/></g><path d="M244 118.5 H249" stroke="#2e75b6" stroke-width="1.4"/><path d="M250.5 118.5 L247.3 115.7 V121.3 Z" fill="#2e75b6"/></svg>
<div class="r" style="left:266.5px;top:112px;width:1px;height:19px;background:#d8d8d8;"></div>
<div class="t" style="left:273px;top:112.5px;width:13px;height:11px;font-size:11.5px;color:#555;transform:rotate(-45deg);transform-origin:6.5px 5.5px">ab</div>
<svg class="s" width="764" height="599" viewBox="0 0 764 599" style=""><path d="M280.3 126.3 L288 118.5" stroke="#555" stroke-width="1.1"/><path d="M289.5 116.8 L284.5 118 L288.3 121.8 Z" fill="#555"/></svg>
<svg class="s" width="764" height="599" viewBox="0 0 764 599" style=""><path d="M293.1 119.2 H298.1 L295.6 122.10000000000001 Z" fill="#505050"/></svg>
<div class="r" style="left:329px;top:65px;width:75px;height:22px;background:#fff;box-sizing:border-box;border:1px solid #d2d2d2"></div>
<div class="t" style="left:331.51px;top:71.00px;font-size:12px;color:#444;font-weight:400;transform:scaleX(0.9011);">General</div>
<svg class="s" width="764" height="599" viewBox="0 0 764 599" style=""><path d="M394.1 75 H399.1 L396.6 77.9 Z" fill="#505050"/></svg>
<div class="t" style="left:335.31px;top:91.25px;font-size:14.5px;color:#505050;font-weight:400;transform:scaleX(1.0504);">$</div>
<svg class="s" width="764" height="599" viewBox="0 0 764 599" style=""><path d="M352.8 97 H357.8 L355.3 99.9 Z" fill="#505050"/></svg>
<div class="t" style="left:366.06px;top:92.00px;font-size:14px;color:#505050;font-weight:400;transform:scaleX(1.0100);">%</div>
<svg class="s" width="764" height="599" viewBox="0 0 764 599" style=""><path d="M392.6 94.8 Q394.6 94.8 394.3 97.3 Q394 99.8 390.8 100.8" fill="none" stroke="#505050" stroke-width="1.7"/><circle cx="392.6" cy="96" r="1.4" fill="#505050"/></svg>
<div class="t" style="left:338.43px;top:111.55px;font-size:8.5px;color:#505050;font-weight:400;transform:scaleX(0.9804);">.0</div>
<div class="t" style="left:333.72px;top:118.55px;font-size:8.5px;color:#505050;font-weight:400;transform:scaleX(0.9863);">.00</div>
<svg class="s" width="764" height="599" viewBox="0 0 764 599" style=""><path d="M333 116.4 H338" stroke="#2e75b6" stroke-width="1.5"/><path d="M331.6 116.4 L334.6 113.8 V119 Z" fill="#2e75b6"/></svg>
<div class="t" style="left:355.03px;top:111.55px;font-size:8.5px;color:#505050;font-weight:400;transform:scaleX(0.9773);">.00</div>
<div class="t" style="left:359.63px;top:118.55px;font-size:8.5px;color:#505050;font-weight:400;transform:scaleX(0.9804);">.0</div>
<svg class="s" width="764" height="599" viewBox="0 0 764 599" style=""><path d="M353 123.4 H358" stroke="#2e75b6" stroke-width="1.5"/><path d="M359.6 123.4 L356.6 120.8 V126 Z" fill="#2e75b6"/></svg>
<div class="t" style="left:433.47px;top:70.80px;font-size:12px;color:#444;font-weight:400;transform:scaleX(0.9862);">Conditional Formatting</div>
<div class="t" style="left:433.49px;top:92.70px;font-size:12px;color:#444;font-weight:400;transform:scaleX(0.9440);">Format as Table</div>
<div class="t" style="left:433.51px;top:114.50px;font-size:12px;color:#444;font-weight:400;transform:scaleX(0.8992);">Cell Styles</div>
<svg class="s" width="764" height="599" viewBox="0 0 764 599" style=""><path d="M555.5 76 H560.5 L558.0 78.9 Z" fill="#505050"/></svg>
<svg class="s" width="764" height="599" viewBox="0 0 764 599" style=""><path d="M517 98 H522 L519.5 100.9 Z" fill="#505050"/></svg>
<svg class="s" width="764" height="599" viewBox="0 0 764 599" style=""><path d="M487.2 120 H492.2 L489.7 122.9 Z" fill="#505050"/></svg>
<svg class="s" width="764" height="599" viewBox="0 0 764 599" style=""><rect x="415.5" y="68.5" width="6" height="4" fill="#e08a30"/><rect x="415.5" y="72.5" width="6" height="4" fill="#2e75b6"/><rect x="415.5" y="76.5" width="6" height="3.5" fill="#e08a30"/><g fill="none" stroke="#888" stroke-width="1"><rect x="415.5" y="68.5" width="13" height="11.5"/><path d="M421.5 68.5 V80 M415.5 72.5 H428.5 M415.5 76.5 H428.5 M425 68.5 V76.5"/></g><rect x="421.5" y="75.5" width="9" height="8" fill="#fff" stroke="#666" stroke-width="1"/><path d="M423.8 78.6 H428.2 M423.8 80.6 H428.2 M427.2 77.2 L424.8 82" stroke="#444" stroke-width="0.9"/></svg>
<svg class="s" width="764" height="599" viewBox="0 0 764 599" style=""><g fill="none" stroke="#999" stroke-width="1"><rect x="415.5" y="90.5" width="14" height="12"/><path d="M415.5 94.5 H429.5 M415.5 98.5 H429.5 M420.2 90.5 V102.5 M424.8 90.5 V102.5"/></g><path d="M426 99 L430.5 92.5 L432 94 L427.5 100.5 Z" fill="#6a6a6a"/><path d="M419 105.8 Q419.5 101 422.5 99.6 Q425 98.6 427.2 100.2 Q426.5 104 419 105.8 Z" fill="#2e75b6"/></svg>
<svg class="s" width="764" height="599" viewBox="0 0 764 599" style=""><g fill="none" stroke="#999" stroke-width="1"><rect x="415.5" y="112.5" width="14" height="12"/><path d="M415.5 116.5 H429.5 M419.5 112.5 V124.5"/></g><rect x="420" y="117" width="9" height="7" fill="#d8d8d8"/><path d="M426 121 L430.5 114.5 L432 116 L427.5 122.5 Z" fill="#6a6a6a"/><path d="M419 127.8 Q419.5 123 422.5 121.6 Q425 120.6 427.2 122.2 Q426.5 126 419 127.8 Z" fill="#2e75b6"/></svg>
<div class="t" style="left:596.48px;top:70.80px;font-size:12px;color:#444;font-weight:400;transform:scaleX(0.9677);">Insert</div>
<div class="t" style="left:596.49px;top:93.10px;font-size:12px;color:#444;font-weight:400;transform:scaleX(0.9462);">Delete</div>
<div class="t" style="left:596.47px;top:115.00px;font-size:12px;color:#444;font-weight:400;transform:scaleX(0.9749);">Format</div>
<svg class="s" width="764" height="599" viewBox="0 0 764 599" style=""><path d="M634 75 H639 L636.5 77.9 Z" fill="#505050"/></svg>
<svg class="s" width="764" height="599" viewBox="0 0 764 599" style=""><path d="M638 98.5 H643 L640.5 101.4 Z" fill="#505050"/></svg>
<svg class="s" width="764" height="599" viewBox="0 0 764 599" style=""><path d="M636.5 120 H641.5 L639.0 122.9 Z" fill="#505050"/></svg>
<svg class="s" width="764" height="599" viewBox="0 0 764 599" style=""><g fill="none" stroke="#808080" stroke-width="1"><rect x="578.5" y="68.5" width="9" height="15" rx="0.5"/><path d="M578.5 72.5 H587.5 M578.5 78.5 H587.5 M583 68.5 V72.5 M583 78.5 V83.5"/><rect x="587.5" y="73.5" width="6.5" height="3.5"/><path d="M590.7 73.5 V77"/></g><path d="M580 75.5 H587" stroke="#2e75b6" stroke-width="1.6"/><path d="M578.6 75.5 L582.2 72.6 V78.4 Z" fill="#2e75b6"/></svg>
<svg class="s" width="764" height="599" viewBox="0 0 764 599" style=""><g fill="none" stroke="#808080" stroke-width="1"><rect x="578.5" y="90.5" width="9" height="4"/><rect x="578.5" y="101.5" width="9" height="4.5"/><rect x="580.5" y="95.5" width="6" height="5"/><path d="M583 90.5 V94.5 M583 101.5 V106"/></g><path d="M586.5 93.5 L593.5 100.5 M593.5 93.5 L586.5 100.5" stroke="#e8704a" stroke-width="1.5"/></svg>
<svg class="s" width="764" height="599" viewBox="0 0 764 599" style=""><g fill="none" stroke="#808080" stroke-width="1"><rect x="578.5" y="115.5" width="14" height="11"/><path d="M578.5 119 H592.5 M578.5 122.7 H592.5 M583.2 115.5 V126.5 M587.8 115.5 V126.5"/></g><rect x="581.5" y="118.5" width="5" height="4" fill="#2e75b6"/><path d="M578.5 113.6 H592.5" stroke="#2e75b6" stroke-width="1.2" stroke-dasharray="2 1"/></svg>
<svg class="s" width="764" height="599" viewBox="0 0 764 599" style=""><path d="M674 69.2 H660.2 L667 75.5 L660.2 81.8 H674" fill="none" stroke="#444" stroke-width="2"/></svg>
<svg class="s" width="764" height="599" viewBox="0 0 764 599" style=""><path d="M680.2 74.5 H685.2 L682.7 77.4 Z" fill="#505050"/></svg>
<svg class="s" width="764" height="599" viewBox="0 0 764 599" style=""><path d="M694.5 74.5 L697.2 68.4 L699.9 74.5 M695.5 72.5 H698.9" fill="none" stroke="#2e75b6" stroke-width="1.4"/><path d="M694.8 77.6 H699.6 L694.8 83 H699.8" fill="none" stroke="#888" stroke-width="1.2"/><path d="M701.8 73.4 H708.6 L706.2 76.6 V79.6 H704.2 V76.6 Z" fill="#6a6a6a"/></svg>
<svg class="s" width="764" height="599" viewBox="0 0 764 599" style=""><path d="M712.3 74.5 H717.3 L714.8 77.4 Z" fill="#505050"/></svg>
<svg class="s" width="764" height="599" viewBox="0 0 764 599" style=""><rect x="660.5" y="90.5" width="13.5" height="15" fill="#fff" stroke="#555" stroke-width="1"/><rect x="660.5" y="90.5" width="13.5" height="3" fill="#666"/><path d="M667.2 95 V102" stroke="#2e75b6" stroke-width="1.6"/><path d="M663.7 99.5 L667.2 103.2 L670.7 99.5" fill="none" stroke="#2e75b6" stroke-width="1.6"/></svg>
<svg class="s" width="764" height="599" viewBox="0 0 764 599" style=""><path d="M678.5 97 H683.5 L681.0 99.9 Z" fill="#505050"/></svg>
<svg class="s" width="764" height="599" viewBox="0 0 764 599" style=""><circle cx="703" cy="95.5" r="3.8" fill="none" stroke="#2e75b6" stroke-width="1.6"/><path d="M700.2 98.3 L695.5 103" stroke="#2e75b6" stroke-width="2"/></svg>
<svg class="s" width="764" height="599" viewBox="0 0 764 599" style=""><path d="M712.3 97 H717.3 L714.8 99.9 Z" fill="#505050"/></svg>
<svg class="s" width="764" height="599" viewBox="0 0 764 599" style=""><path d="M660 120.5 L667.5 113 L673.2 117.5 L665.5 125.2 Z" fill="#f0a0ac"/><path d="M660 120.5 L662.5 118 L668 122.8 L665.5 125.2 Z" fill="#e88898"/></svg>
<svg class="s" width="764" height="599" viewBox="0 0 764 599" style=""><path d="M678.5 119 H683.5 L681.0 121.9 Z" fill="#505050"/></svg>
</body></html>
